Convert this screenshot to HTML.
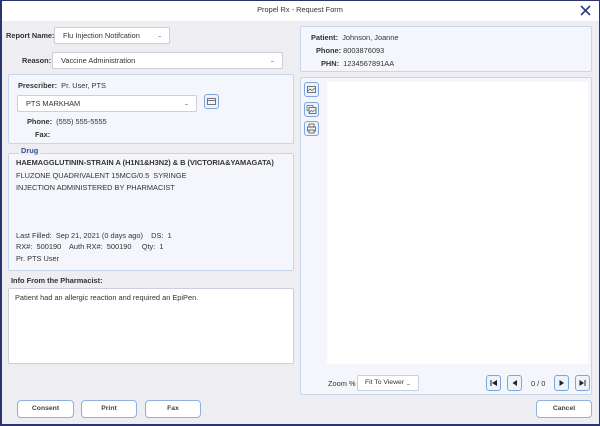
<!DOCTYPE html>
<html><head><meta charset="utf-8"><style>
*{box-sizing:border-box;margin:0;padding:0}
body{width:600px;height:426px;overflow:hidden;font-family:"Liberation Sans",sans-serif;font-size:7.4px;color:#333;background:#ededf2;position:relative}
.a{position:absolute;white-space:nowrap}
.frame{left:0;top:0;width:600px;height:426px;border:1px solid #2a3470;border-left-width:2px;border-bottom-width:2px;pointer-events:none}
.title{left:0;top:0;width:600px;height:21px;background:#fff}
.b{font-weight:bold;color:#333}
.dd{background:#fff;border:1px solid #c9cfdc;border-radius:2px;padding-left:8px;line-height:15px;overflow:hidden}
.dd:after{content:"";position:absolute;right:8px;top:8px;width:3px;height:1px;background:#aab}
.box{background:#f4f6fb;border:1px solid #c6d6ee;border-radius:2px}
.btn{background:#fff;border:1px solid #8fb0e0;border-radius:4px;text-align:center;line-height:16px;font-weight:bold;font-size:6.8px;color:#444}
.ib{background:#eef3fb;border:1px solid #7fa6dc;border-radius:3px;width:15px;height:15px}
</style></head><body>
<div class="a title"></div>
<div class="a" style="left:0;top:5px;width:600px;text-align:center;font-size:7.4px;color:#333">Propel Rx - Request Form</div>
<svg class="a" style="left:580px;top:5px" width="11" height="11"><path d="M1 1L10 10M10 1L1 10" stroke="#2a3f8a" stroke-width="1.6"/></svg>

<div class="a b" style="left:6px;top:31px">Report Name:</div>
<div class="a dd" style="left:54px;top:27px;width:116px;height:17px">Flu Injection Notifcation</div>
<div class="a b" style="left:22px;top:56px">Reason:</div>
<div class="a dd" style="left:52px;top:52px;width:231px;height:17px">Vaccine Administration</div>

<div class="a box" style="left:8px;top:74px;width:286px;height:70px"></div>
<div class="a" style="left:18px;top:81px"><span class="b">Prescriber:</span>&nbsp; Pr. User, PTS</div>
<div class="a dd" style="left:17px;top:95px;width:180px;height:17px">PTS MARKHAM</div>
<div class="a ib" style="left:204px;top:94px"><svg width="13" height="13"><rect x="2.5" y="3.5" width="8" height="6" fill="none" stroke="#555" stroke-width=".8"/><path d="M2.5 5.5H10.5" stroke="#555" stroke-width=".8"/></svg></div>
<div class="a" style="left:27px;top:117px"><span class="b">Phone:</span>&nbsp; (555) 555-5555</div>
<div class="a b" style="left:35px;top:130px">Fax:</div>

<div class="a box" style="left:8px;top:153px;width:286px;height:118px"></div>
<div class="a" style="left:18px;top:146px;font-weight:bold;color:#3a4f9a;background:#ededf2;padding:0 3px">Drug</div>
<div class="a b" style="left:16px;top:158px">HAEMAGGLUTININ-STRAIN A (H1N1&amp;H3N2) &amp; B (VICTORIA&amp;YAMAGATA)</div>
<div class="a" style="left:16px;top:171px">FLUZONE QUADRIVALENT 15MCG/0.5&nbsp; SYRINGE</div>
<div class="a" style="left:16px;top:183px">INJECTION ADMINISTERED BY PHARMACIST</div>
<div class="a" style="left:16px;top:231px">Last Filled:&nbsp; Sep 21, 2021 (0 days ago)&nbsp;&nbsp;&nbsp; DS:&nbsp; 1</div>
<div class="a" style="left:16px;top:242px">RX#:&nbsp; 500190&nbsp;&nbsp;&nbsp; Auth RX#:&nbsp; 500190&nbsp;&nbsp;&nbsp;&nbsp; Qty:&nbsp; 1</div>
<div class="a" style="left:16px;top:254px">Pr. PTS User</div>

<div class="a b" style="left:11px;top:276px">Info From the Pharmacist:</div>
<div class="a" style="left:8px;top:288px;width:286px;height:76px;background:#fff;border:1px solid #c9cfdc;border-radius:2px"></div>
<div class="a" style="left:15px;top:293px">Patient had an allergic reaction and required an EpiPen.</div>

<div class="a btn" style="left:17px;top:400px;width:57px;height:18px">Consent</div>
<div class="a btn" style="left:81px;top:400px;width:56px;height:18px">Print</div>
<div class="a btn" style="left:145px;top:400px;width:56px;height:18px">Fax</div>
<div class="a btn" style="left:536px;top:400px;width:56px;height:18px">Cancel</div>

<div class="a box" style="left:300px;top:26px;width:292px;height:46px"></div>
<div class="a" style="left:311px;top:33px"><span class="b">Patient:</span>&nbsp; Johnson, Joanne</div>
<div class="a" style="left:316px;top:46px"><span class="b">Phone:</span> 8003876093</div>
<div class="a" style="left:321px;top:59px"><span class="b">PHN:</span>&nbsp; 1234567891AA</div>

<div class="a box" style="left:300px;top:77px;width:292px;height:318px"></div>
<div class="a" style="left:327px;top:82px;width:261px;height:282px;background:#fff"></div>
<div class="a ib" style="left:304px;top:82px"><svg width="13" height="13"><rect x="2.5" y="3.5" width="8" height="6" fill="none" stroke="#555" stroke-width=".8"/><path d="M3 8L5 6L7 7.5L10 5" stroke="#555" stroke-width=".7" fill="none"/></svg></div>
<div class="a ib" style="left:304px;top:102px"><svg width="13" height="13"><rect x="2" y="2.5" width="6" height="5" fill="none" stroke="#555" stroke-width=".7"/><rect x="4" y="4.5" width="7" height="6" fill="#eef3fb" stroke="#555" stroke-width=".8"/><path d="M4.5 9.5L6.5 7.5L8 8.5L10.5 6.5" stroke="#555" stroke-width=".7" fill="none"/></svg></div>
<div class="a ib" style="left:304px;top:121px"><svg width="13" height="13"><rect x="4" y="2" width="5" height="3" fill="none" stroke="#555" stroke-width=".8"/><rect x="2.5" y="5" width="8" height="4" fill="none" stroke="#555" stroke-width=".8"/><rect x="4" y="8" width="5" height="3" fill="#eef3fb" stroke="#555" stroke-width=".8"/></svg></div>

<div class="a" style="left:328px;top:379px">Zoom %</div>
<div class="a dd" style="left:357px;top:375px;width:62px;height:16px;line-height:14px;padding-left:7px;font-size:6.8px">Fit To Viewer</div>
<div class="a ib" style="left:486px;top:375px;width:15px;height:16px"><svg width="13" height="14"><path d="M4 4V10" stroke="#222" stroke-width="1"/><path d="M10 4L5 7L10 10Z" fill="#222"/></svg></div>
<div class="a ib" style="left:507px;top:375px;width:15px;height:16px"><svg width="13" height="14"><path d="M9 4L4.5 7L9 10Z" fill="#222"/></svg></div>
<div class="a" style="left:531px;top:379px">0 / 0</div>
<div class="a ib" style="left:554px;top:375px;width:15px;height:16px"><svg width="13" height="14"><path d="M4.5 4L9 7L4.5 10Z" fill="#222"/></svg></div>
<div class="a ib" style="left:575px;top:375px;width:15px;height:16px"><svg width="13" height="14"><path d="M3.5 4L8 7L3.5 10Z" fill="#222"/><path d="M9 4V10" stroke="#222" stroke-width="1"/></svg></div>

<div class="a frame"></div>
</body></html>
